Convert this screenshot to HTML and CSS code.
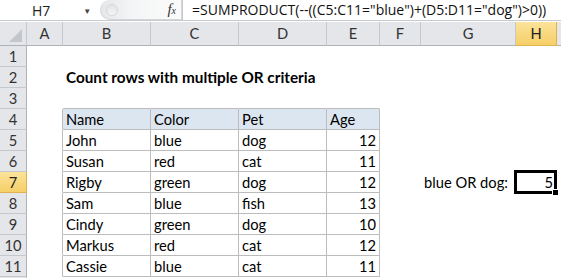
FILE: index.html
```html
<!DOCTYPE html>
<html>
  <head>
    <title>Count rows with multiple OR criteria</title>
    <link rel="stylesheet" href="styles.css">
  </head>
  <body>
    <div class="formula-bar">
      <div class="name-box">
        <span class="ref">H7</span>
        <span class="drop">&#9660;</span>
      </div>
      <div class="splitter">
        <span class="knob"></span>
        <span class="fx">f<small>x</small></span>
      </div>
      <div class="formula">=SUMPRODUCT(--((C5:C11="blue")+(D5:D11="dog")&gt;0))</div>
    </div>

    <div class="sheet">
      <!-- column headers -->
      <div class="corner"><span class="tri"></span></div>
      <div class="ch">A</div>
      <div class="ch">B</div>
      <div class="ch">C</div>
      <div class="ch">D</div>
      <div class="ch">E</div>
      <div class="ch">F</div>
      <div class="ch">G</div>
      <div class="ch active">H</div>
      <div class="ch"></div>

      <!-- row 1 -->
      <div class="rh">1</div>
      <div class="c"></div><div class="c"></div><div class="c"></div><div class="c"></div>
      <div class="c"></div><div class="c"></div><div class="c"></div><div class="c"></div><div class="c"></div>

      <!-- row 2 -->
      <div class="rh">2</div>
      <div class="c"></div>
      <div class="c title">Count rows with multiple OR criteria</div>
      <div class="c"></div><div class="c"></div><div class="c"></div>
      <div class="c"></div><div class="c"></div><div class="c"></div><div class="c"></div>

      <!-- row 3 -->
      <div class="rh">3</div>
      <div class="c"></div>
      <div class="c tt"></div><div class="c tt"></div><div class="c tt"></div><div class="c tt"></div>
      <div class="c"></div><div class="c"></div><div class="c"></div><div class="c"></div>

      <!-- row 4 -->
      <div class="rh">4</div>
      <div class="c tl"></div>
      <div class="c tb head">Name</div>
      <div class="c tb head">Color</div>
      <div class="c tb head">Pet</div>
      <div class="c tb head">Age</div>
      <div class="c"></div><div class="c"></div><div class="c"></div><div class="c"></div>

      <!-- row 5 -->
      <div class="rh">5</div>
      <div class="c tl"></div>
      <div class="c tb">John</div>
      <div class="c tb">blue</div>
      <div class="c tb">dog</div>
      <div class="c tb num">12</div>
      <div class="c"></div><div class="c"></div><div class="c"></div><div class="c"></div>

      <!-- row 6 -->
      <div class="rh">6</div>
      <div class="c tl"></div>
      <div class="c tb">Susan</div>
      <div class="c tb">red</div>
      <div class="c tb">cat</div>
      <div class="c tb num">11</div>
      <div class="c"></div><div class="c"></div><div class="c"></div><div class="c"></div>

      <!-- row 7 -->
      <div class="rh active">7</div>
      <div class="c tl"></div>
      <div class="c tb">Rigby</div>
      <div class="c tb">green</div>
      <div class="c tb">dog</div>
      <div class="c tb num">12</div>
      <div class="c"></div>
      <div class="c num label">blue OR dog:</div>
      <div class="c num selected">5</div>
      <div class="c"></div>

      <!-- row 8 -->
      <div class="rh">8</div>
      <div class="c tl"></div>
      <div class="c tb">Sam</div>
      <div class="c tb">blue</div>
      <div class="c tb">fish</div>
      <div class="c tb num">13</div>
      <div class="c"></div><div class="c"></div><div class="c"></div><div class="c"></div>

      <!-- row 9 -->
      <div class="rh">9</div>
      <div class="c tl"></div>
      <div class="c tb">Cindy</div>
      <div class="c tb">green</div>
      <div class="c tb">dog</div>
      <div class="c tb num">10</div>
      <div class="c"></div><div class="c"></div><div class="c"></div><div class="c"></div>

      <!-- row 10 -->
      <div class="rh">10</div>
      <div class="c tl"></div>
      <div class="c tb">Markus</div>
      <div class="c tb">red</div>
      <div class="c tb">cat</div>
      <div class="c tb num">12</div>
      <div class="c"></div><div class="c"></div><div class="c"></div><div class="c"></div>

      <!-- row 11 -->
      <div class="rh">11</div>
      <div class="c tl"></div>
      <div class="c tb">Cassie</div>
      <div class="c tb">blue</div>
      <div class="c tb">cat</div>
      <div class="c tb num">11</div>
      <div class="c"></div><div class="c"></div><div class="c"></div><div class="c"></div>

      <!-- row 12, only its top edge shows -->
      <div class="rh"></div>
      <div class="c"></div><div class="c"></div><div class="c"></div><div class="c"></div>
      <div class="c"></div><div class="c"></div><div class="c"></div><div class="c"></div><div class="c"></div>
    </div>
  </body>
</html>
```

FILE: styles.css
```css
body {
  margin: 0;
  background-color: #fff;
  font-family: Lato, "Liberation Sans", sans-serif;
  overflow: hidden;
}

/* formula bar */
.formula-bar {
  display: flex;
  height: 20px;
  border-bottom: 1px solid #c6c9ce;
  margin-bottom: 1px;
}

.name-box {
  width: 97px;
  display: flex;
  align-items: center;
  font-family: "Open Sans", sans-serif;
  font-size: 14px;
  color: #222;
}

.name-box .ref {
  margin-left: 32px;
}

.name-box .drop {
  margin-left: 33px;
  font-size: 8px;
  color: #444;
}

.splitter {
  width: 80px;
  margin-left: 3px;
  display: flex;
  align-items: center;
  border: 1px solid #d4d6d9;
  border-top: none;
  border-radius: 0 0 0 11px;
  border-top-left-radius: 11px;
  background: linear-gradient(to right, #e6e7e9, #f4f5f6 40%, #fbfbfb);
}

.knob {
  width: 10px;
  height: 10px;
  margin-left: 5px;
  border-radius: 50%;
  background: linear-gradient(#e2e3e5, #f6f6f7);
  border: 1px solid #d6d7d9;
}

.fx {
  margin-left: auto;
  margin-right: 5px;
  font-family: "Liberation Serif", serif;
  font-style: italic;
  font-size: 15px;
  color: #333;
}

.fx small {
  font-size: 10px;
}

.formula {
  flex: 1;
  border-left: 1px solid #c6c9ce;
  padding-left: 9px;
  font-family: "Open Sans", sans-serif;
  font-size: 14px;
  line-height: 20px;
  color: #111;
  white-space: nowrap;
}

/* worksheet grid */
.sheet {
  display: grid;
  grid-template-columns: 27px 36px 88px 88px 88px 53px 41px 95px 41px 1fr;
  grid-template-rows: 24px;
  grid-auto-rows: 21px;
  font-size: 14.7px;
}

.sheet > div {
  box-sizing: border-box;
  border-right: 1px solid #fff;
  border-bottom: 1px solid #fff;
  white-space: nowrap;
}

.corner,
.ch,
.rh {
  background-color: #e4e6e9;
  color: #333;
}

.sheet > .corner,
.sheet > .ch {
  border-right-color: #c5c8cd;
  border-bottom-color: #aeb3ba;
  text-align: center;
  line-height: 23px;
}

.corner {
  position: relative;
}

.tri {
  position: absolute;
  right: 4px;
  bottom: 3px;
  width: 0;
  height: 0;
  border-left: 13px solid transparent;
  border-bottom: 13px solid #c3c6ca;
}

.sheet > .rh {
  border-right-color: #aeb3ba;
  border-bottom-color: #c5c8cd;
  text-align: center;
  line-height: 21px;
}

.sheet > .active {
  background: linear-gradient(#fbe39a, #f6cf67);
  border-color: #e0b24c;
  color: #222;
}

.c {
  padding: 0 3px;
  line-height: 21px;
  color: #000;
}

.title {
  font-weight: bold;
  font-size: 15.3px;
  overflow: visible;
}

.num {
  text-align: right;
}

.sheet > .tt {
  border-bottom-color: #bcbcbc;
}

.sheet > .tl {
  border-right-color: #bcbcbc;
}

.sheet > .tb {
  border-right-color: #bcbcbc;
  border-bottom-color: #bcbcbc;
}

.head {
  background-color: #dce6f1;
}

.label {
  padding-right: 8px;
}

.selected {
  position: relative;
}

.selected::after {
  content: "";
  position: absolute;
  left: -2px;
  top: -2px;
  right: -1px;
  bottom: -2px;
  border: 3px solid #000;
}

.selected::before {
  content: "";
  position: absolute;
  right: -3px;
  bottom: -4px;
  width: 5px;
  height: 5px;
  background-color: #000;
  border: 1px solid #fff;
  z-index: 1;
}
```
